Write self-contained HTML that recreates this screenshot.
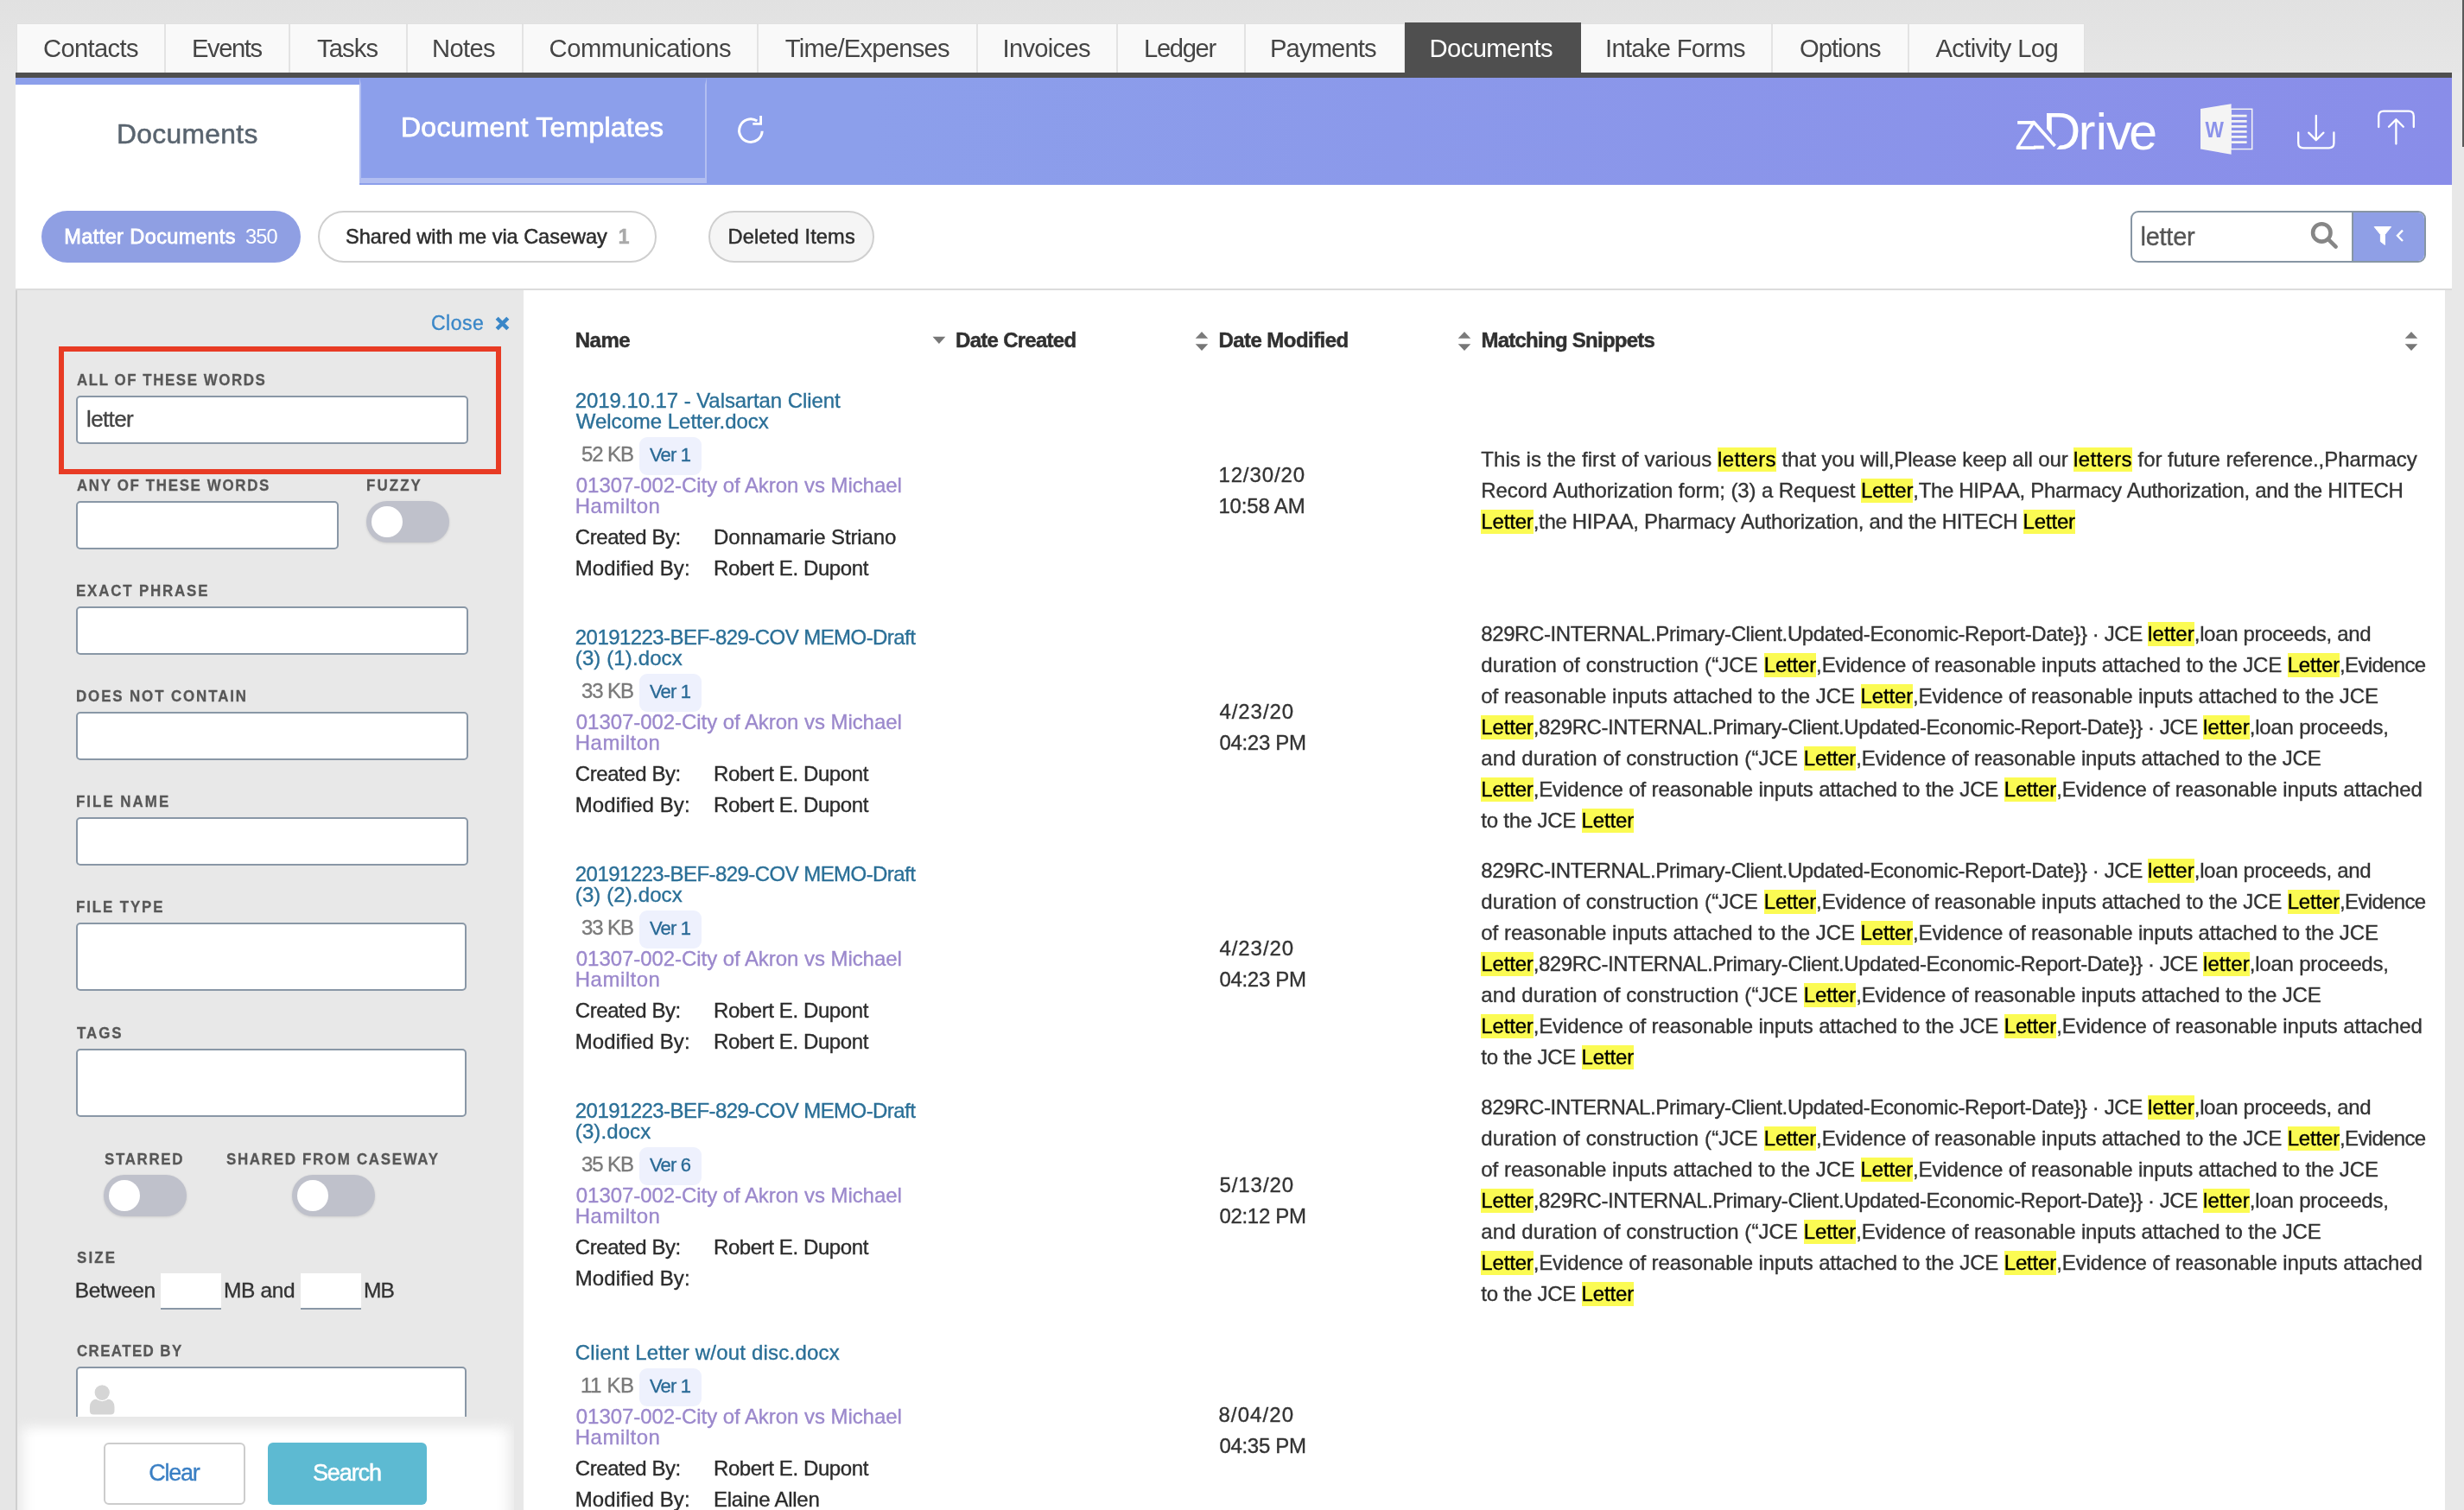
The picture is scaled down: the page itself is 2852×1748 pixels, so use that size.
<!DOCTYPE html>
<html lang="en"><head><meta charset="utf-8"><title>Documents</title>
<style>
html,body{margin:0;padding:0}
html{width:2852px;height:1748px;overflow:hidden}
body{width:2852px;height:1748px;overflow:hidden;position:relative;background:#e6e6e6;font-family:"Liberation Sans",Arial,sans-serif;color:#333}
section,nav,aside,main,header,footer{position:absolute;left:0;top:0;width:0;height:0;will-change:transform}
div,span,a,label,button,svg,i,b,h1,h2,ul,li,p{position:absolute;box-sizing:border-box;margin:0;padding:0}
.t{white-space:nowrap;line-height:1;text-decoration:none;-webkit-text-stroke:.35px}
nav .t{-webkit-text-stroke:0}
.hd{-webkit-text-stroke:.45px}
.lb{-webkit-text-stroke:.3px;transform:scaleX(.9);transform-origin:0 0}
mark,.sg,.t b,.t i{position:static;white-space:pre;font-kerning:none}
mark{background:#fbfb53;color:#000;padding:0 0 1px 0}
.inp{background:#fff;border:2px solid #8997a6;border-radius:5px}
.tog{background:#bfc1cb;border-radius:24px;box-shadow:0 1px 3px rgba(0,0,0,.12)}
.tog i{left:6px;top:5.5px;width:36px;height:36px;border-radius:50%;background:#fff}
.lb{font-weight:700;color:#575757;letter-spacing:2px}
</style></head><body>
<div id="app" style="left:0;top:0;width:2852px;height:1748px;overflow:hidden">

<div style="left:0px;top:0px;width:2852px;height:84px;background:linear-gradient(#e1e1e1,#e6e6e6)"></div>
<div style="left:18px;top:98px;width:2820px;height:1650px;background:#fff"></div>
<div style="left:2838px;top:84px;width:14px;height:1664px;background:#e8e8e8"></div>
<div style="left:2849.5px;top:0px;width:2.5px;height:169.5px;background:#5a5a5a"></div>
<nav>
<div style="left:18.5px;top:27px;width:2394.5px;height:57px;background:#f9f9f9;border:1px solid #e0e0e0;border-bottom:0"></div>
<div style="left:190px;top:28px;width:2px;height:56px;background:#e3e3e3"></div>
<a class="t" style="font-size: 29.2px; color: rgb(69, 69, 69); left: 50px; top: 42px; letter-spacing: -0.656px;">Contacts</a>
<div style="left:334px;top:28px;width:2px;height:56px;background:#e3e3e3"></div>
<a class="t" style="font-size: 29.2px; color: rgb(69, 69, 69); left: 222px; top: 42px; letter-spacing: -1.447px;">Events</a>
<div style="left:470px;top:28px;width:2px;height:56px;background:#e3e3e3"></div>
<a class="t" style="font-size: 29.2px; color: rgb(69, 69, 69); left: 367px; top: 42px; letter-spacing: -0.878px;">Tasks</a>
<div style="left:603.7px;top:28px;width:2px;height:56px;background:#e3e3e3"></div>
<a class="t" style="font-size: 29.2px; color: rgb(69, 69, 69); left: 500px; top: 42px; letter-spacing: -0.663px;">Notes</a>
<div style="left:875.7px;top:28px;width:2px;height:56px;background:#e3e3e3"></div>
<a class="t" style="font-size: 29.2px; color: rgb(69, 69, 69); left: 635.6px; top: 42px; letter-spacing: -0.49px;">Communications</a>
<div style="left:1130px;top:28px;width:2px;height:56px;background:#e3e3e3"></div>
<a class="t" style="font-size: 29.2px; color: rgb(69, 69, 69); left: 908.8px; top: 42px; letter-spacing: -0.773px;">Time/Expenses</a>
<div style="left:1292px;top:28px;width:2px;height:56px;background:#e3e3e3"></div>
<a class="t" style="font-size: 29.2px; color: rgb(69, 69, 69); left: 1160.5px; top: 42px; letter-spacing: -0.711px;">Invoices</a>
<div style="left:1440px;top:28px;width:2px;height:56px;background:#e3e3e3"></div>
<a class="t" style="font-size: 29.2px; color: rgb(69, 69, 69); left: 1324px; top: 42px; letter-spacing: -1.333px;">Ledger</a>
<div style="left:1625px;top:28px;width:2px;height:56px;background:#e3e3e3"></div>
<a class="t" style="font-size: 29.2px; color: rgb(69, 69, 69); left: 1470px; top: 42px; letter-spacing: -0.883px;">Payments</a>
<div style="left:1626px;top:26px;width:204px;height:60px;background:#4f4f4f"></div>
<a class="t" style="font-size: 29.2px; color: rgb(255, 255, 255); left: 1654.5px; top: 42px; letter-spacing: -0.566px;">Documents</a>
<div style="left:2049.6px;top:28px;width:2px;height:56px;background:#e3e3e3"></div>
<a class="t" style="font-size: 29.2px; color: rgb(69, 69, 69); left: 1858px; top: 42px; letter-spacing: -0.701px;">Intake Forms</a>
<div style="left:2208px;top:28px;width:2px;height:56px;background:#e3e3e3"></div>
<a class="t" style="font-size: 29.2px; color: rgb(69, 69, 69); left: 2083px; top: 42px; letter-spacing: -0.999px;">Options</a>
<a class="t" style="font-size: 29.2px; color: rgb(69, 69, 69); left: 2240.4px; top: 42px; letter-spacing: -0.637px;">Activity Log</a>
<div style="left:18px;top:84px;width:2820px;height:6px;background:#4f4f4f"></div>
</nav>
<header>
<div style="left:18px;top:90px;width:2820px;height:124px;background:linear-gradient(90deg,#8c9feb 0%,#8c9feb 35%,#898de9 100%)"></div>
<div style="left:18px;top:98px;width:398px;height:116px;background:#fff"></div>
<a class="t" style="font-size: 31.8px; color: rgb(89, 100, 111); -webkit-text-stroke: 0.5px rgb(89, 100, 111); left: 135px; top: 139.8px; letter-spacing: 0.31px;">Documents</a>
<div style="left:416px;top:90px;width:402px;height:122px;border-style:solid;border-color:transparent rgba(255,255,255,.33) rgba(255,255,255,.33) rgba(255,255,255,.33);border-width:8px 2px 6px 2px"></div>
<a class="t" style="font-size: 32px; color: rgb(255, 255, 255); -webkit-text-stroke: 0.75px rgb(255, 255, 255); left: 464px; top: 131px; letter-spacing: 0.237px;">Document Templates</a>
<svg style="left:849px;top:131px" width="40" height="40" viewBox="0 0 40 40" fill="none" stroke="#fff" stroke-width="3"><path d="M33.2 20.8 A13.3 13.3 0 1 1 27.3 9.1"></path><path d="M31.6 3 V12.4 H22.3" stroke-width="2.8"></path></svg>
<svg style="left:2330px;top:120px" width="175" height="62" viewBox="0 0 175 62"><defs><clipPath id="dcut"><path clip-rule="evenodd" d="M0 0H175V62H0Z M37 26.6 L44.9 36.6 V47.9 H54.3 L49.9 53.4 H37 Z"></path></clipPath></defs><text clip-path="url(#dcut)" y="52.5" font-family="Liberation Sans, Arial, sans-serif" font-size="59" fill="#fff"><tspan x="2.5" font-size="47.4" textLength="24.6" lengthAdjust="spacingAndGlyphs">Z</tspan><tspan x="33.9" font-size="61.4">D</tspan><tspan x="75.8 95.65 107.9 134.2">rive</tspan></text><path d="M22.6 21.5 H24.1 L48.6 49.1" fill="none" stroke="#fff" stroke-width="3.7" stroke-linejoin="miter" stroke-miterlimit="10"></path><path d="M24 50.5 H35.8" fill="none" stroke="#fff" stroke-width="3.8"></path></svg>
<svg style="left:2544px;top:118px" width="66" height="64" viewBox="0 0 66 64"><rect x="38" y="8.3" width="24.7" height="46.3" fill="none" stroke="#f4f4f4" stroke-width="1.5"></rect><g stroke="#f4f4f4" stroke-width="2.7"><path d="M38.6 16.2H56.6M38.6 22.3H56.6M38.6 28.4H56.6M38.6 34.3H56.6M38.6 40.3H56.6M38.6 46.7H56.6"></path></g><path d="M3 8 L38.6 2.2 V60.7 L3 54.6 Z" fill="#f4f4f4"></path><text x="8.6" y="40.6" font-family="Liberation Sans, Arial, sans-serif" font-weight="700" font-size="26.5" fill="#8b92ea" textLength="21.4" lengthAdjust="spacingAndGlyphs">W</text></svg>
<svg style="left:2656px;top:128px" width="50" height="50" viewBox="0 0 50 50" fill="none" stroke="#fff" stroke-width="2.3" stroke-linecap="round" stroke-linejoin="round"><path d="M4.2 25.5 V37.5 Q4.2 43.3 10 43.3 H39.6 Q45.4 43.3 45.4 37.5 V25.5"></path><path d="M24.8 5.8 V34 M16.2 25.6 L24.8 34.3 L33.4 25.6"></path></svg>
<svg style="left:2749px;top:122px" width="50" height="50" viewBox="0 0 50 50" fill="none" stroke="#fff" stroke-width="2.3" stroke-linecap="round" stroke-linejoin="round"><path d="M4.2 25 V12.5 Q4.2 6.7 10 6.7 H39 Q44.8 6.7 44.8 12.5 V25"></path><path d="M24.4 44.6 V16.4 M16 24.8 L24.4 16.2 L32.8 24.8"></path></svg>
</header>
<section>
<div style="left:48px;top:244px;width:300px;height:60px;background:#8f9fe3;border-radius:30px"></div>
<span class="t" style="font-size: 23.6px; color: rgb(255, 255, 255); -webkit-text-stroke: 0.8px rgb(255, 255, 255); left: 74.3px; top: 263px; letter-spacing: 0.363px;">Matter Documents</span>
<span class="t" style="font-size: 23.6px; color: rgb(255, 255, 255); -webkit-text-stroke: 0px; left: 284px; top: 263px; letter-spacing: -0.922px;">350</span>
<div style="left:368px;top:244px;width:392px;height:60px;background:#fff;border:2px solid #cfcfcf;border-radius:30px"></div>
<span class="t" style="font-size: 23.6px; color: rgb(45, 45, 45); -webkit-text-stroke: 0.5px rgb(45, 45, 45); left: 400.1px; top: 263px; letter-spacing: -0.061px;">Shared with me via Caseway</span>
<span class="t" style="font-size: 23.6px; color: rgb(170, 170, 170); font-weight: 700; left: 715.6px; top: 263px;">1</span>
<div style="left:820px;top:244px;width:191.6px;height:60px;background:#f5f5f5;border:2px solid #cfcfcf;border-radius:30px"></div>
<span class="t" style="font-size: 23.6px; color: rgb(45, 45, 45); -webkit-text-stroke: 0.5px rgb(45, 45, 45); left: 842.5px; top: 263px; letter-spacing: 0.136px;">Deleted Items</span>
<div style="left:2466px;top:244px;width:342px;height:60px;background:#fff;border:2px solid #8796a4;border-radius:9px;overflow:hidden"><div style="left:254px;top:-2px;width:90px;height:60px;background:#8f9fe6;border-left:2px solid #8796a4"></div></div>
<span class="t" style="font-size: 29px; color: rgb(85, 85, 85); left: 2477.6px; top: 260px; letter-spacing: -0.283px;">letter</span>
<svg style="left:2670px;top:252px" width="40" height="40" viewBox="0 0 40 40" fill="none" stroke="#868686" stroke-width="4.6" stroke-linecap="round"><circle cx="17.3" cy="17.4" r="10.2"></circle><path d="M25 25.2 L33.6 33.6"></path></svg>
<svg style="left:2745px;top:258px" width="42" height="30" viewBox="0 0 42 30"><path d="M3.2 4.6 H22.6 L15.4 13.6 V25.4 L10.4 21.6 V13.6 Z" fill="#fff" stroke="#fff" stroke-width="1" stroke-linejoin="round"></path><path d="M36 8.6 L30 14.8 L36 21" fill="none" stroke="#fff" stroke-width="2.4"></path></svg>
<div style="left:18px;top:333.5px;width:2820px;height:2px;background:#dcdcdc"></div>
</section>
<aside>
<div style="left:18px;top:335.5px;width:588px;height:1412.5px;background:#e8e8e8"></div>
<div style="left:18.2px;top:335.5px;width:2px;height:1412.5px;background:#cfcfcf"></div>
<a class="t" style="font-size: 23px; color: rgb(58, 135, 200); left: 499px; top: 363.3px; letter-spacing: 0.472px;">Close</a>
<svg style="left:572px;top:365px" width="19" height="19" viewBox="0 0 19 19"><path d="M3.2 3.2 L15.8 15.8 M15.8 3.2 L3.2 15.8" stroke="#3a87c8" stroke-width="4.4" fill="none"></path></svg>
<div style="left:68px;top:401px;width:511.5px;height:148px;border:6px solid #e83b24"></div>
<label class="t lb" style="font-size: 18.8px; left: 89.1px; top: 431px; letter-spacing: 1.733px;">ALL OF THESE WORDS</label>
<div class="inp" style="left:88px;top:458px;width:454px;height:56px;"></div>
<span class="t" style="font-size: 26px; color: rgb(68, 68, 68); left: 100.1px; top: 472.3px; letter-spacing: -0.649px;">letter</span>
<label class="t lb" style="font-size: 18.8px; left: 89.1px; top: 553px; letter-spacing: 1.842px;">ANY OF THESE WORDS</label>
<label class="t lb" style="font-size: 18.8px; left: 423.9px; top: 553px; letter-spacing: 2.338px;">FUZZY</label>
<div class="inp" style="left:88px;top:580px;width:304px;height:56px;"></div>
<div class="tog" style="left:424px;top:580px;width:96px;height:47.5px;"><i></i></div>
<label class="t lb" style="font-size: 18.8px; left: 88.2px; top: 675px; letter-spacing: 2.025px;">EXACT PHRASE</label>
<div class="inp" style="left:88px;top:702px;width:454px;height:56px;"></div>
<label class="t lb" style="font-size: 18.8px; left: 88.2px; top: 797px; letter-spacing: 2.096px;">DOES NOT CONTAIN</label>
<div class="inp" style="left:88px;top:824px;width:454px;height:56px;"></div>
<label class="t lb" style="font-size: 18.8px; left: 88.2px; top: 919px; letter-spacing: 2.235px;">FILE NAME</label>
<div class="inp" style="left:88px;top:946px;width:454px;height:56px;"></div>
<label class="t lb" style="font-size: 18.8px; left: 88.2px; top: 1041px; letter-spacing: 2.085px;">FILE TYPE</label>
<div class="inp" style="left:88px;top:1068px;width:452px;height:79px;"></div>
<label class="t lb" style="font-size: 18.8px; left: 89.1px; top: 1187px; letter-spacing: 2.176px;">TAGS</label>
<div class="inp" style="left:88px;top:1214px;width:452px;height:79px;"></div>
<label class="t lb" style="font-size: 18.8px; left: 120.8px; top: 1333px; letter-spacing: 1.845px;">STARRED</label>
<label class="t lb" style="font-size: 18.8px; left: 262.1px; top: 1333px; letter-spacing: 1.885px;">SHARED FROM CASEWAY</label>
<div class="tog" style="left:120px;top:1360px;width:96px;height:47.5px;"><i></i></div>
<div class="tog" style="left:337.8px;top:1360px;width:96px;height:47.5px;"><i></i></div>
<label class="t lb" style="font-size: 18.8px; left: 89.1px; top: 1447px; letter-spacing: 2.409px;">SIZE</label>
<span class="t" style="font-size: 24.5px; color: rgb(51, 51, 51); left: 86.8px; top: 1482px; letter-spacing: -0.32px;">Between</span>
<div style="left:186px;top:1474px;width:70px;height:42px;background:#fff;border-bottom:2px solid #8997a6"></div>
<span class="t" style="font-size: 24.5px; color: rgb(51, 51, 51); left: 259.1px; top: 1482px; letter-spacing: -0.382px;">MB and</span>
<div style="left:348px;top:1474px;width:70px;height:42px;background:#fff;border-bottom:2px solid #8997a6"></div>
<span class="t" style="font-size: 24.5px; color: rgb(51, 51, 51); left: 421px; top: 1482px; letter-spacing: -0.909px;">MB</span>
<label class="t lb" style="font-size: 18.8px; left: 89.1px; top: 1555px; letter-spacing: 1.549px;">CREATED BY</label>
<div class="inp" style="left:88px;top:1582px;width:452px;height:79px;"></div>
<svg style="left:100px;top:1598.5px" width="36" height="42" viewBox="0 0 36 42"><circle cx="18.2" cy="13" r="8.7" fill="#d5d5d5"></circle><path d="M3.9 34 V30 Q3.9 20.4 13 20.4 H23.4 Q32.5 20.4 32.5 30 V34 Q32.5 38.6 28 38.6 H8.4 Q3.9 38.6 3.9 34 Z" fill="#d5d5d5"></path><circle cx="18.2" cy="13" r="9.6" fill="none" stroke="#fff" stroke-width="1.2"></circle></svg>
<footer>
<div style="left:20px;top:1640px;width:574.5px;height:108px;overflow:hidden"><div style="left:0px;top:0px;width:574.5px;height:140px;background:#fff;box-shadow:inset 0 0 18px 5px #e8e8e8,inset 0 16px 16px -6px #e8e8e8"></div></div>
<div style="left:120px;top:1670px;width:164px;height:71.5px;background:#fff;border:2px solid #ccc;border-radius:6px"></div>
<span class="t" style="font-size: 27px; color: rgb(58, 127, 196); left: 172.3px; top: 1692.4px; letter-spacing: -1.282px;">Clear</span>
<div style="left:310px;top:1670px;width:184px;height:71.8px;background:#5dbad2;border-radius:6px"></div>
<span class="t" style="font-size: 27px; color: rgb(255, 255, 255); -webkit-text-stroke: 0.5px rgb(255, 255, 255); left: 361.9px; top: 1692.4px; letter-spacing: -1.086px;">Search</span>
</footer>
</aside>
<main>
<div style="left:2830px;top:335.5px;width:8.5px;height:1412.5px;background:#e8e8e8"></div>
<span class="t hd" style="font-size: 24px; color: rgb(48, 48, 48); font-weight: 700; left: 665.8px; top: 381.6px; letter-spacing: -0.54px;">Name</span>
<span class="t hd" style="font-size: 24px; color: rgb(48, 48, 48); font-weight: 700; left: 1106.1px; top: 381.6px; letter-spacing: -0.727px;">Date Created</span>
<span class="t hd" style="font-size: 24px; color: rgb(48, 48, 48); font-weight: 700; left: 1410.4px; top: 381.6px; letter-spacing: -0.548px;">Date Modified</span>
<span class="t hd" style="font-size: 24px; color: rgb(48, 48, 48); font-weight: 700; left: 1714.4px; top: 381.6px; letter-spacing: -0.737px;">Matching Snippets</span>
<svg style="left:1079px;top:389px" width="16" height="10" viewBox="0 0 16 10"><path d="M0.5 0.8 H15.3 L7.9 9 Z" fill="#777"></path></svg>
<svg style="left:1382.8px;top:384px" width="16" height="23" viewBox="0 0 16 23"><path d="M0.7 7.8 H15.3 L8 0.1 Z" fill="#7b7b7b"></path><path d="M0.7 14.3 H15.3 L8 22 Z" fill="#777"></path></svg>
<svg style="left:1687px;top:384px" width="16" height="23" viewBox="0 0 16 23"><path d="M0.7 7.8 H15.3 L8 0.1 Z" fill="#7b7b7b"></path><path d="M0.7 14.3 H15.3 L8 22 Z" fill="#777"></path></svg>
<svg style="left:2782.6px;top:384px" width="16" height="23" viewBox="0 0 16 23"><path d="M0.7 7.8 H15.3 L8 0.1 Z" fill="#7b7b7b"></path><path d="M0.7 14.3 H15.3 L8 22 Z" fill="#777"></path></svg>
<div class="row">
<a class="t" style="font-size: 24px; color: rgb(42, 111, 151); left: 665.8px; top: 452px; letter-spacing: -0.079px;">2019.10.17 - Valsartan Client</a>
<a class="t" style="font-size: 24px; color: rgb(42, 111, 151); left: 666.8px; top: 476px; letter-spacing: -0.037px;">Welcome Letter.docx</a>
<span class="t" style="font-size: 24px; color: rgb(122, 122, 122); left: 672.9px; top: 514px; letter-spacing: -1.043px;">52 KB</span>
<div style="left:740px;top:506px;width:71.6px;height:43.7px;background:#eef1fd;border-radius:9px"></div>
<span class="t" style="font-size: 22px; color: rgb(42, 106, 150); left: 752px; top: 516px; letter-spacing: -0.858px;">Ver 1</span>
<a class="t" style="font-size: 24px; color: rgb(155, 136, 204); left: 666.8px; top: 550px; letter-spacing: -0.056px;">01307-002-City of Akron vs Michael</a>
<a class="t" style="font-size: 24px; color: rgb(155, 136, 204); left: 665.8px; top: 574px; letter-spacing: 0.478px;">Hamilton</a>
<span class="t" style="font-size: 24px; color: rgb(43, 43, 43); left: 665.8px; top: 610px; letter-spacing: -0.426px;">Created By:</span>
<span class="t" style="font-size: 24px; color: rgb(43, 43, 43); left: 826px; top: 610px; letter-spacing: -0.123px;">Donnamarie Striano</span>
<span class="t" style="font-size: 24px; color: rgb(43, 43, 43); left: 665.8px; top: 646px; letter-spacing: 0.064px;">Modified By:</span>
<span class="t" style="font-size: 24px; color: rgb(43, 43, 43); left: 826px; top: 646px; letter-spacing: -0.405px;">Robert E. Dupont</span>
<span class="t" style="font-size: 24px; color: rgb(51, 51, 51); left: 1410.4px; top: 538px; letter-spacing: 0.889px;">12/30/20</span>
<span class="t" style="font-size: 24px; color: rgb(51, 51, 51); left: 1410.4px; top: 574px; letter-spacing: -0.162px;">10:58 AM</span>
<p class="t" style="font-size: 24px; color: rgb(51, 51, 51); left: 1714.3px; top: 520px;"><span class="sg" style="letter-spacing: 0.055px;">This is the first of various </span><mark class="sg" style="letter-spacing: 0.377px;">letters</mark><span class="sg" style="letter-spacing: -0.158px;"> that you will,Please keep all our </span><mark class="sg" style="letter-spacing: 0.377px;">letters</mark><span class="sg" style="letter-spacing: -0.082px;"> for future reference.,Pharmacy</span></p>
<p class="t" style="font-size: 24px; color: rgb(51, 51, 51); left: 1714.3px; top: 556px;"><span class="sg" style="letter-spacing: -0.112px;">Record Authorization form; (3) a Request </span><mark class="sg" style="letter-spacing: -0.163px;">Letter</mark><span class="sg" style="letter-spacing: -0.343px;">,The HIPAA, Pharmacy Authorization, and the HITECH</span></p>
<p class="t" style="font-size: 24px; color: rgb(51, 51, 51); left: 1714.3px; top: 592px;"><mark class="sg" style="letter-spacing: -0.163px;">Letter</mark><span class="sg" style="letter-spacing: -0.316px;">,the HIPAA, Pharmacy Authorization, and the HITECH </span><mark class="sg" style="letter-spacing: -0.163px;">Letter</mark></p>
</div>
<div class="row">
<a class="t" style="font-size: 24px; color: rgb(42, 111, 151); left: 665.8px; top: 726px; letter-spacing: -0.558px;">20191223-BEF-829-COV MEMO-Draft</a>
<a class="t" style="font-size: 24px; color: rgb(42, 111, 151); left: 665.8px; top: 750px; letter-spacing: 0.11px;">(3) (1).docx</a>
<span class="t" style="font-size: 24px; color: rgb(122, 122, 122); left: 672.9px; top: 788px; letter-spacing: -1.043px;">33 KB</span>
<div style="left:740px;top:780px;width:71.6px;height:43.7px;background:#eef1fd;border-radius:9px"></div>
<span class="t" style="font-size: 22px; color: rgb(42, 106, 150); left: 752px; top: 790px; letter-spacing: -0.858px;">Ver 1</span>
<a class="t" style="font-size: 24px; color: rgb(155, 136, 204); left: 666.8px; top: 824px; letter-spacing: -0.056px;">01307-002-City of Akron vs Michael</a>
<a class="t" style="font-size: 24px; color: rgb(155, 136, 204); left: 665.8px; top: 848px; letter-spacing: 0.478px;">Hamilton</a>
<span class="t" style="font-size: 24px; color: rgb(43, 43, 43); left: 665.8px; top: 884px; letter-spacing: -0.426px;">Created By:</span>
<span class="t" style="font-size: 24px; color: rgb(43, 43, 43); left: 826px; top: 884px; letter-spacing: -0.405px;">Robert E. Dupont</span>
<span class="t" style="font-size: 24px; color: rgb(43, 43, 43); left: 665.8px; top: 920px; letter-spacing: 0.064px;">Modified By:</span>
<span class="t" style="font-size: 24px; color: rgb(43, 43, 43); left: 826px; top: 920px; letter-spacing: -0.405px;">Robert E. Dupont</span>
<span class="t" style="font-size: 24px; color: rgb(51, 51, 51); left: 1411.4px; top: 812px; letter-spacing: 0.946px;">4/23/20</span>
<span class="t" style="font-size: 24px; color: rgb(51, 51, 51); left: 1411.4px; top: 848px; letter-spacing: -0.305px;">04:23 PM</span>
<p class="t" style="font-size: 24px; color: rgb(51, 51, 51); left: 1714.3px; top: 722px;"><span class="sg" style="letter-spacing: -0.405px;">829RC-INTERNAL.Primary-Client.Updated-Economic-Report-Date}} · JCE </span><mark class="sg" style="letter-spacing: 0.057px;">letter</mark><span class="sg" style="letter-spacing: -0.338px;">,loan proceeds, and</span></p>
<p class="t" style="font-size: 24px; color: rgb(51, 51, 51); left: 1714.3px; top: 758px;"><span class="sg" style="letter-spacing: 0.105px;">duration of construction (“JCE </span><mark class="sg" style="letter-spacing: -0.163px;">Letter</mark><span class="sg" style="letter-spacing: -0.134px;">,Evidence of reasonable inputs attached to the JCE </span><mark class="sg" style="letter-spacing: -0.163px;">Letter</mark><span class="sg" style="letter-spacing: -0.656px;">,Evidence</span></p>
<p class="t" style="font-size: 24px; color: rgb(51, 51, 51); left: 1714.3px; top: 794px;"><span class="sg" style="letter-spacing: -0.024px;">of reasonable inputs attached to the JCE </span><mark class="sg" style="letter-spacing: -0.163px;">Letter</mark><span class="sg" style="letter-spacing: -0.138px;">,Evidence of reasonable inputs attached to the JCE</span></p>
<p class="t" style="font-size: 24px; color: rgb(51, 51, 51); left: 1714.3px; top: 830px;"><mark class="sg" style="letter-spacing: -0.163px;">Letter</mark><span class="sg" style="letter-spacing: -0.445px;">,829RC-INTERNAL.Primary-Client.Updated-Economic-Report-Date}} · JCE </span><mark class="sg" style="letter-spacing: 0.057px;">letter</mark><span class="sg" style="letter-spacing: -0.214px;">,loan proceeds,</span></p>
<p class="t" style="font-size: 24px; color: rgb(51, 51, 51); left: 1714.3px; top: 866px;"><span class="sg" style="letter-spacing: 0.075px;">and duration of construction (“JCE </span><mark class="sg" style="letter-spacing: -0.163px;">Letter</mark><span class="sg" style="letter-spacing: -0.144px;">,Evidence of reasonable inputs attached to the JCE</span></p>
<p class="t" style="font-size: 24px; color: rgb(51, 51, 51); left: 1714.3px; top: 902px;"><mark class="sg" style="letter-spacing: -0.163px;">Letter</mark><span class="sg" style="letter-spacing: -0.144px;">,Evidence of reasonable inputs attached to the JCE </span><mark class="sg" style="letter-spacing: -0.163px;">Letter</mark><span class="sg" style="letter-spacing: -0.086px;">,Evidence of reasonable inputs attached</span></p>
<p class="t" style="font-size: 24px; color: rgb(51, 51, 51); left: 1714.3px; top: 938px;"><span class="sg" style="letter-spacing: -0.221px;">to the JCE </span><mark class="sg" style="letter-spacing: -0.163px;">Letter</mark></p>
</div>
<div class="row">
<a class="t" style="font-size: 24px; color: rgb(42, 111, 151); left: 665.8px; top: 1000px; letter-spacing: -0.558px;">20191223-BEF-829-COV MEMO-Draft</a>
<a class="t" style="font-size: 24px; color: rgb(42, 111, 151); left: 665.8px; top: 1024px; letter-spacing: 0.11px;">(3) (2).docx</a>
<span class="t" style="font-size: 24px; color: rgb(122, 122, 122); left: 672.9px; top: 1062px; letter-spacing: -1.043px;">33 KB</span>
<div style="left:740px;top:1054px;width:71.6px;height:43.7px;background:#eef1fd;border-radius:9px"></div>
<span class="t" style="font-size: 22px; color: rgb(42, 106, 150); left: 752px; top: 1064px; letter-spacing: -0.858px;">Ver 1</span>
<a class="t" style="font-size: 24px; color: rgb(155, 136, 204); left: 666.8px; top: 1098px; letter-spacing: -0.056px;">01307-002-City of Akron vs Michael</a>
<a class="t" style="font-size: 24px; color: rgb(155, 136, 204); left: 665.8px; top: 1122px; letter-spacing: 0.478px;">Hamilton</a>
<span class="t" style="font-size: 24px; color: rgb(43, 43, 43); left: 665.8px; top: 1158px; letter-spacing: -0.426px;">Created By:</span>
<span class="t" style="font-size: 24px; color: rgb(43, 43, 43); left: 826px; top: 1158px; letter-spacing: -0.405px;">Robert E. Dupont</span>
<span class="t" style="font-size: 24px; color: rgb(43, 43, 43); left: 665.8px; top: 1194px; letter-spacing: 0.064px;">Modified By:</span>
<span class="t" style="font-size: 24px; color: rgb(43, 43, 43); left: 826px; top: 1194px; letter-spacing: -0.405px;">Robert E. Dupont</span>
<span class="t" style="font-size: 24px; color: rgb(51, 51, 51); left: 1411.4px; top: 1086px; letter-spacing: 0.946px;">4/23/20</span>
<span class="t" style="font-size: 24px; color: rgb(51, 51, 51); left: 1411.4px; top: 1122px; letter-spacing: -0.305px;">04:23 PM</span>
<p class="t" style="font-size: 24px; color: rgb(51, 51, 51); left: 1714.3px; top: 996px;"><span class="sg" style="letter-spacing: -0.405px;">829RC-INTERNAL.Primary-Client.Updated-Economic-Report-Date}} · JCE </span><mark class="sg" style="letter-spacing: 0.057px;">letter</mark><span class="sg" style="letter-spacing: -0.338px;">,loan proceeds, and</span></p>
<p class="t" style="font-size: 24px; color: rgb(51, 51, 51); left: 1714.3px; top: 1032px;"><span class="sg" style="letter-spacing: 0.105px;">duration of construction (“JCE </span><mark class="sg" style="letter-spacing: -0.163px;">Letter</mark><span class="sg" style="letter-spacing: -0.134px;">,Evidence of reasonable inputs attached to the JCE </span><mark class="sg" style="letter-spacing: -0.163px;">Letter</mark><span class="sg" style="letter-spacing: -0.656px;">,Evidence</span></p>
<p class="t" style="font-size: 24px; color: rgb(51, 51, 51); left: 1714.3px; top: 1068px;"><span class="sg" style="letter-spacing: -0.024px;">of reasonable inputs attached to the JCE </span><mark class="sg" style="letter-spacing: -0.163px;">Letter</mark><span class="sg" style="letter-spacing: -0.138px;">,Evidence of reasonable inputs attached to the JCE</span></p>
<p class="t" style="font-size: 24px; color: rgb(51, 51, 51); left: 1714.3px; top: 1104px;"><mark class="sg" style="letter-spacing: -0.163px;">Letter</mark><span class="sg" style="letter-spacing: -0.445px;">,829RC-INTERNAL.Primary-Client.Updated-Economic-Report-Date}} · JCE </span><mark class="sg" style="letter-spacing: 0.057px;">letter</mark><span class="sg" style="letter-spacing: -0.214px;">,loan proceeds,</span></p>
<p class="t" style="font-size: 24px; color: rgb(51, 51, 51); left: 1714.3px; top: 1140px;"><span class="sg" style="letter-spacing: 0.075px;">and duration of construction (“JCE </span><mark class="sg" style="letter-spacing: -0.163px;">Letter</mark><span class="sg" style="letter-spacing: -0.144px;">,Evidence of reasonable inputs attached to the JCE</span></p>
<p class="t" style="font-size: 24px; color: rgb(51, 51, 51); left: 1714.3px; top: 1176px;"><mark class="sg" style="letter-spacing: -0.163px;">Letter</mark><span class="sg" style="letter-spacing: -0.144px;">,Evidence of reasonable inputs attached to the JCE </span><mark class="sg" style="letter-spacing: -0.163px;">Letter</mark><span class="sg" style="letter-spacing: -0.086px;">,Evidence of reasonable inputs attached</span></p>
<p class="t" style="font-size: 24px; color: rgb(51, 51, 51); left: 1714.3px; top: 1212px;"><span class="sg" style="letter-spacing: -0.221px;">to the JCE </span><mark class="sg" style="letter-spacing: -0.163px;">Letter</mark></p>
</div>
<div class="row">
<a class="t" style="font-size: 24px; color: rgb(42, 111, 151); left: 665.8px; top: 1274px; letter-spacing: -0.558px;">20191223-BEF-829-COV MEMO-Draft</a>
<a class="t" style="font-size: 24px; color: rgb(42, 111, 151); left: 665.8px; top: 1298px; letter-spacing: 0.101px;">(3).docx</a>
<span class="t" style="font-size: 24px; color: rgb(122, 122, 122); left: 672.9px; top: 1336px; letter-spacing: -1.043px;">35 KB</span>
<div style="left:740px;top:1328px;width:71.6px;height:43.7px;background:#eef1fd;border-radius:9px"></div>
<span class="t" style="font-size: 22px; color: rgb(42, 106, 150); left: 752px; top: 1338px; letter-spacing: -0.858px;">Ver 6</span>
<a class="t" style="font-size: 24px; color: rgb(155, 136, 204); left: 666.8px; top: 1372px; letter-spacing: -0.056px;">01307-002-City of Akron vs Michael</a>
<a class="t" style="font-size: 24px; color: rgb(155, 136, 204); left: 665.8px; top: 1396px; letter-spacing: 0.478px;">Hamilton</a>
<span class="t" style="font-size: 24px; color: rgb(43, 43, 43); left: 665.8px; top: 1432px; letter-spacing: -0.426px;">Created By:</span>
<span class="t" style="font-size: 24px; color: rgb(43, 43, 43); left: 826px; top: 1432px; letter-spacing: -0.405px;">Robert E. Dupont</span>
<span class="t" style="font-size: 24px; color: rgb(43, 43, 43); left: 665.8px; top: 1468px; letter-spacing: 0.064px;">Modified By:</span>
<span class="t" style="font-size: 24px; color: rgb(51, 51, 51); left: 1411.4px; top: 1360px; letter-spacing: 0.946px;">5/13/20</span>
<span class="t" style="font-size: 24px; color: rgb(51, 51, 51); left: 1411.4px; top: 1396px; letter-spacing: -0.305px;">02:12 PM</span>
<p class="t" style="font-size: 24px; color: rgb(51, 51, 51); left: 1714.3px; top: 1270px;"><span class="sg" style="letter-spacing: -0.405px;">829RC-INTERNAL.Primary-Client.Updated-Economic-Report-Date}} · JCE </span><mark class="sg" style="letter-spacing: 0.057px;">letter</mark><span class="sg" style="letter-spacing: -0.338px;">,loan proceeds, and</span></p>
<p class="t" style="font-size: 24px; color: rgb(51, 51, 51); left: 1714.3px; top: 1306px;"><span class="sg" style="letter-spacing: 0.105px;">duration of construction (“JCE </span><mark class="sg" style="letter-spacing: -0.163px;">Letter</mark><span class="sg" style="letter-spacing: -0.134px;">,Evidence of reasonable inputs attached to the JCE </span><mark class="sg" style="letter-spacing: -0.163px;">Letter</mark><span class="sg" style="letter-spacing: -0.656px;">,Evidence</span></p>
<p class="t" style="font-size: 24px; color: rgb(51, 51, 51); left: 1714.3px; top: 1342px;"><span class="sg" style="letter-spacing: -0.024px;">of reasonable inputs attached to the JCE </span><mark class="sg" style="letter-spacing: -0.163px;">Letter</mark><span class="sg" style="letter-spacing: -0.138px;">,Evidence of reasonable inputs attached to the JCE</span></p>
<p class="t" style="font-size: 24px; color: rgb(51, 51, 51); left: 1714.3px; top: 1378px;"><mark class="sg" style="letter-spacing: -0.163px;">Letter</mark><span class="sg" style="letter-spacing: -0.445px;">,829RC-INTERNAL.Primary-Client.Updated-Economic-Report-Date}} · JCE </span><mark class="sg" style="letter-spacing: 0.057px;">letter</mark><span class="sg" style="letter-spacing: -0.214px;">,loan proceeds,</span></p>
<p class="t" style="font-size: 24px; color: rgb(51, 51, 51); left: 1714.3px; top: 1414px;"><span class="sg" style="letter-spacing: 0.075px;">and duration of construction (“JCE </span><mark class="sg" style="letter-spacing: -0.163px;">Letter</mark><span class="sg" style="letter-spacing: -0.144px;">,Evidence of reasonable inputs attached to the JCE</span></p>
<p class="t" style="font-size: 24px; color: rgb(51, 51, 51); left: 1714.3px; top: 1450px;"><mark class="sg" style="letter-spacing: -0.163px;">Letter</mark><span class="sg" style="letter-spacing: -0.144px;">,Evidence of reasonable inputs attached to the JCE </span><mark class="sg" style="letter-spacing: -0.163px;">Letter</mark><span class="sg" style="letter-spacing: -0.086px;">,Evidence of reasonable inputs attached</span></p>
<p class="t" style="font-size: 24px; color: rgb(51, 51, 51); left: 1714.3px; top: 1486px;"><span class="sg" style="letter-spacing: -0.221px;">to the JCE </span><mark class="sg" style="letter-spacing: -0.163px;">Letter</mark></p>
</div>
<div class="row">
<a class="t" style="font-size: 24px; color: rgb(42, 111, 151); left: 665.8px; top: 1554px; letter-spacing: 0.206px;">Client Letter w/out disc.docx</a>
<span class="t" style="font-size: 24px; color: rgb(122, 122, 122); left: 671.9px; top: 1592px; letter-spacing: -0.347px;">11 KB</span>
<div style="left:740px;top:1584px;width:71.6px;height:43.7px;background:#eef1fd;border-radius:9px"></div>
<span class="t" style="font-size: 22px; color: rgb(42, 106, 150); left: 752px; top: 1594px; letter-spacing: -0.858px;">Ver 1</span>
<a class="t" style="font-size: 24px; color: rgb(155, 136, 204); left: 666.8px; top: 1628px; letter-spacing: -0.056px;">01307-002-City of Akron vs Michael</a>
<a class="t" style="font-size: 24px; color: rgb(155, 136, 204); left: 665.8px; top: 1652px; letter-spacing: 0.478px;">Hamilton</a>
<span class="t" style="font-size: 24px; color: rgb(43, 43, 43); left: 665.8px; top: 1688px; letter-spacing: -0.426px;">Created By:</span>
<span class="t" style="font-size: 24px; color: rgb(43, 43, 43); left: 826px; top: 1688px; letter-spacing: -0.405px;">Robert E. Dupont</span>
<span class="t" style="font-size: 24px; color: rgb(43, 43, 43); left: 665.8px; top: 1724px; letter-spacing: 0.064px;">Modified By:</span>
<span class="t" style="font-size: 24px; color: rgb(43, 43, 43); left: 826px; top: 1724px; letter-spacing: -0.237px;">Elaine Allen</span>
<span class="t" style="font-size: 24px; color: rgb(51, 51, 51); left: 1410.4px; top: 1626px; letter-spacing: 1.112px;">8/04/20</span>
<span class="t" style="font-size: 24px; color: rgb(51, 51, 51); left: 1411.4px; top: 1662px; letter-spacing: -0.305px;">04:35 PM</span>
</div>
</main>
</div>
</body></html>
